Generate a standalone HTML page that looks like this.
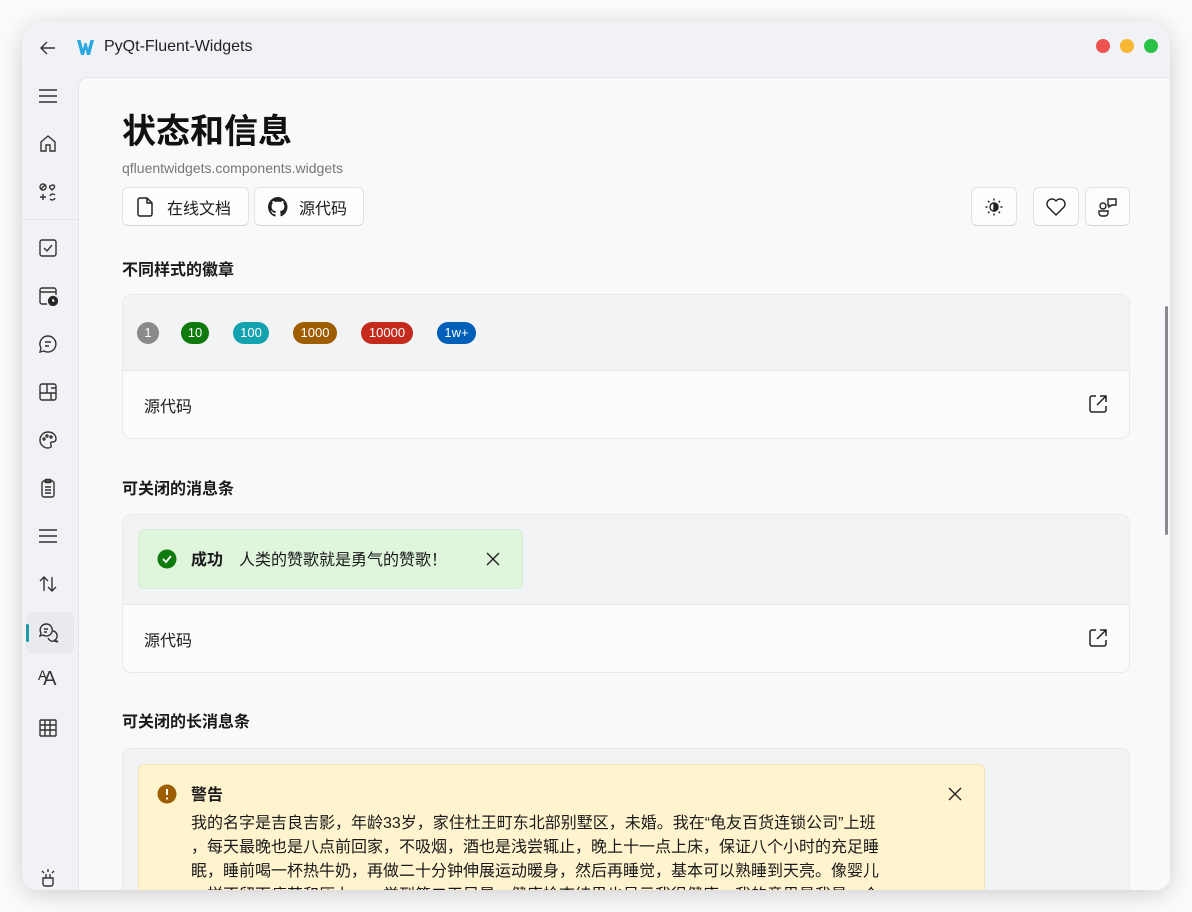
<!DOCTYPE html>
<html><head><meta charset="utf-8"><style>
*{box-sizing:border-box;margin:0;padding:0}
html,body{width:1192px;height:912px;overflow:hidden}
body{background:#fbfbfb;font-family:"Liberation Sans","Noto Sans CJK SC",sans-serif;color:#1a1a1a;position:relative}
.win{position:absolute;left:22px;top:22px;width:1148px;height:868px;border-radius:22px 22px 14px 14px;background:#f0f2f5;box-shadow:0 4px 24px rgba(0,0,0,.18);overflow:hidden}
.abs{position:absolute}
.panel{position:absolute;left:56px;top:55px;width:1092px;height:813px;background:#f8f9fb;border-top:1px solid #e3e5e8;border-left:1px solid #e3e5e8;border-top-left-radius:10px;overflow:hidden}
.btn{position:absolute;top:109px;height:39px;background:#fdfdfd;border:1px solid #e2e2e2;border-bottom-color:#d4d4d4;border-radius:6px;font-size:16px;display:flex;align-items:center}
.h{position:absolute;left:43px;font-size:16px;font-weight:bold}
.card{position:absolute;left:43px;width:1008px;border:1px solid #e8e9eb;border-radius:9px;overflow:hidden;background:#fafbfc}
.top{background:#f2f3f5;border-bottom:1px solid #e8e9eb;position:relative}
.badge{position:absolute;top:27px;height:22px;border-radius:11px;color:#fff;font-size:13px;line-height:22px;text-align:center}
.src{position:absolute;left:21px;font-size:16px}
svg{display:block}
</style></head><body>
<div class="win">
 <svg class="abs" style="left:16px;top:16px" width="20" height="20" viewBox="0 0 20 20" fill="none" stroke="#333" stroke-width="1.4"><path d="M17 10H3M9 4L3 10l6 6"/></svg>
 <svg class="abs" style="left:54px;top:17px" width="19" height="17" viewBox="0 0 19 17"><path d="M1 1l4 15h3l1.5-6 1.5 6h3l4-15h-3.5L12 10 10.5 4h-2L7 10 4.5 1z" fill="#29a8e0"/></svg>
 <div class="abs" style="left:82px;top:16px;font-size:16px;color:#222">PyQt-Fluent-Widgets</div>
 <div class="abs" style="left:1074px;top:17px;width:14px;height:14px;border-radius:50%;background:#ef5350"></div>
 <div class="abs" style="left:1098px;top:17px;width:14px;height:14px;border-radius:50%;background:#f7b733"></div>
 <div class="abs" style="left:1122px;top:17px;width:14px;height:14px;border-radius:50%;background:#29c247"></div>

 <svg class="abs" style="left:16px;top:64px" width="20" height="20" viewBox="0 0 20 20" stroke="#333" stroke-width="1.4"><path d="M1 4h18M1 10h18M1 16h18"/></svg>
 <svg class="abs" style="left:16px;top:112px" width="20" height="20" viewBox="0 0 20 20" fill="none" stroke="#333" stroke-width="1.4"><path d="M3 8l7-6 7 6v9h-5v-6H8v6H3z"/></svg>
 <svg class="abs" style="left:16px;top:160px" width="20" height="20" viewBox="0 0 20 20" fill="none" stroke="#333" stroke-width="1.4"><circle cx="5" cy="5" r="3"/><path d="M3 7l4-4M13 4c1-2 5-1 3 2l-2 2-2-2c-1-1 0-3 1-2M2 15h6M5 12v6M12 14a3 3 0 015-1M17 16a3 3 0 01-5 1"/></svg>
 <div class="abs" style="left:0;top:197px;width:56px;height:1px;background:#e3e5e8"></div>
 <svg class="abs" style="left:16px;top:216px" width="20" height="20" viewBox="0 0 20 20" fill="none" stroke="#333" stroke-width="1.4"><rect x="2" y="2" width="16" height="16" rx="2"/><path d="M6 10l3 3 5-6"/></svg>
 <svg class="abs" style="left:16px;top:264px" width="20" height="20" viewBox="0 0 20 20" fill="none" stroke="#333" stroke-width="1.4"><path d="M9 18H4a2 2 0 01-2-2V4a2 2 0 012-2h12a2 2 0 012 2v5M2 6h16"/><circle cx="15" cy="15" r="4.5" fill="#222"/><path d="M15 13v2h1.5" stroke="#fff"/></svg>
 <svg class="abs" style="left:16px;top:312px" width="20" height="20" viewBox="0 0 20 20" fill="none" stroke="#333" stroke-width="1.4"><path d="M10 2a8 8 0 11-4 15l-4 1 1-4A8 8 0 0110 2zM7 8h6M7 12h4"/></svg>
 <svg class="abs" style="left:16px;top:360px" width="20" height="20" viewBox="0 0 20 20" fill="none" stroke="#333" stroke-width="1.4"><rect x="2" y="2" width="16" height="16" rx="2"/><path d="M2 11h16M9 2v9M13 11v7M13 6h5"/></svg>
 <svg class="abs" style="left:16px;top:408px" width="20" height="20" viewBox="0 0 20 20" fill="none" stroke="#333" stroke-width="1.4"><path d="M10 2c5 0 8 3 8 7 0 3-3 3-4 3s-2 1-1 3c1 2-1 3-3 3-4 0-8-3-8-8s4-8 8-8z"/><circle cx="6" cy="9" r="1"/><circle cx="9" cy="6" r="1"/><circle cx="13" cy="7" r="1"/></svg>
 <svg class="abs" style="left:16px;top:456px" width="20" height="20" viewBox="0 0 20 20" fill="none" stroke="#333" stroke-width="1.4"><rect x="4" y="3" width="12" height="16" rx="2"/><rect x="7" y="1.5" width="6" height="3" rx="1"/><path d="M7 9h6M7 12h6M7 15h6"/></svg>
 <svg class="abs" style="left:16px;top:504px" width="20" height="20" viewBox="0 0 20 20" stroke="#333" stroke-width="1.4"><path d="M1 4h18M1 10h18M1 16h18"/></svg>
 <svg class="abs" style="left:16px;top:552px" width="20" height="20" viewBox="0 0 20 20" fill="none" stroke="#333" stroke-width="1.4"><path d="M6 17V3M2 7l4-4 4 4M14 3v14M10 13l4 4 4-4"/></svg>
 <div class="abs" style="left:4px;top:590px;width:48px;height:42px;border-radius:6px;background:#e8eaed"></div>
 <div class="abs" style="left:4px;top:602px;width:3px;height:18px;border-radius:2px;background:#1e9aa8"></div>
 <svg class="abs" style="left:16px;top:600px" width="22" height="22" viewBox="0 0 22 22" fill="none" stroke="#333" stroke-width="1.4"><path d="M8 2a6 6 0 11-3 11l-3 1 1-3A6 6 0 018 2zM6 7h4M6 10h3M15 9a5 5 0 012 9l3 2-4-1a5 5 0 01-6-3"/></svg>
 <div class="abs" style="left:16px;top:646px;font-size:20px;color:#333;letter-spacing:-4px">ᴬA</div>
 <svg class="abs" style="left:16px;top:696px" width="20" height="20" viewBox="0 0 20 20" fill="none" stroke="#333" stroke-width="1.4"><rect x="2" y="2" width="16" height="16" rx="1"/><path d="M2 7h16M2 12h16M7 2v16M12 2v16"/></svg>
 <svg class="abs" style="left:16px;top:846px" width="20" height="20" viewBox="0 0 20 20" fill="none" stroke="#333" stroke-width="1.4"><path d="M5 10h10v6a2 2 0 01-2 2H7a2 2 0 01-2-2zM8 10V6M12 10V6M4 3l2 2M16 3l-2 2M10 1v3"/></svg>

 <div class="panel">
  <div class="abs" style="left:43px;top:26px;font-size:34px;font-weight:bold;color:#111">状态和信息</div>
  <div class="abs" style="left:43px;top:82px;font-size:14px;color:#777">qfluentwidgets.components.widgets</div>
  <div class="btn" style="left:43px;width:127px"><svg style="margin-left:14px" width="18" height="20" viewBox="0 0 18 20" fill="none" stroke="#222" stroke-width="1.5"><path d="M3 1h7l5 5v11a2 2 0 01-2 2H3a2 2 0 01-2-2V3a2 2 0 012-2zM10 1v5h5"/></svg><span style="margin-left:12px">在线文档</span></div>
  <div class="btn" style="left:175px;width:110px"><svg style="margin-left:13px" width="20" height="20" viewBox="0 0 16 16"><path fill="#222" d="M8 0a8 8 0 00-2.5 15.6c.4 0 .5-.2.5-.4v-1.5c-2.2.5-2.7-1-2.7-1-.4-.9-.9-1.2-.9-1.2-.7-.5.1-.5.1-.5.8.1 1.2.8 1.2.8.7 1.3 1.900.9 2.3.7.1-.5.3-.9.5-1.1-1.8-.2-3.6-.9-3.6-4 0-.9.3-1.6.8-2.1-.1-.2-.4-1 .1-2.1 0 0 .7-.2 2.2.8a7.5 7.5 0 014 0c1.5-1 2.2-.8 2.2-.8.4 1.1.2 1.9.1 2.1.5.6.8 1.3.8 2.1 0 3.1-1.9 3.7-3.6 3.9.3.3.5.8.5 1.5v2.2c0 .2.1.5.6.4A8 8 0 008 0z"/></svg><span style="margin-left:11px">源代码</span></div>
  <div class="btn" style="left:892px;width:46px;justify-content:center"><svg width="20" height="20" viewBox="0 0 20 20" fill="none" stroke="#222" stroke-width="1.4"><circle cx="10" cy="10" r="4"/><path d="M10 6a4 4 0 010 8z" fill="#222"/><path d="M10 1.5v2M10 16.5v2M1.5 10h2M16.5 10h2M4 4l1.4 1.4M14.6 14.6L16 16M4 16l1.4-1.4M14.6 5.4L16 4"/></svg></div>
  <div class="btn" style="left:954px;width:46px;justify-content:center"><svg width="22" height="20" viewBox="0 0 22 20" fill="none" stroke="#222" stroke-width="1.4"><path d="M11 18L3 10a5 5 0 018-6 5 5 0 018 6z"/></svg></div>
  <div class="btn" style="left:1006px;width:45px;justify-content:center"><svg width="22" height="22" viewBox="0 0 22 22" fill="none" stroke="#222" stroke-width="1.4"><circle cx="6" cy="10" r="3"/><path d="M2 15h9v2a3 3 0 01-3 3H5a3 3 0 01-3-3zM11 3h8v6h-4l-3 2V9h-1z"/></svg></div>

  <div class="h" style="top:178px">不同样式的徽章</div>
  <div class="card" style="top:216px;height:145px">
   <div class="top" style="height:76px">
    <div class="badge" style="left:14px;width:22px;background:#8a8a8a">1</div>
    <div class="badge" style="left:58px;width:28px;background:#0f7b0f">10</div>
    <div class="badge" style="left:110px;width:36px;background:#14a1b0">100</div>
    <div class="badge" style="left:170px;width:44px;background:#9d5d00">1000</div>
    <div class="badge" style="left:238px;width:52px;background:#c42b1c">10000</div>
    <div class="badge" style="left:314px;width:39px;background:#005fb8">1w+</div>
   </div>
   <div class="src" style="top:98px">源代码</div>
   <svg class="abs" style="left:964px;top:98px" width="22" height="22" viewBox="0 0 22 22" fill="none" stroke="#222" stroke-width="1.5"><path d="M9 3H5a2 2 0 00-2 2v12a2 2 0 002 2h12a2 2 0 002-2v-4M13 3h6v6M19 3l-9 9"/></svg>
  </div>

  <div class="h" style="top:397px">可关闭的消息条</div>
  <div class="card" style="top:436px;height:159px">
   <div class="top" style="height:90px">
    <div class="abs" style="left:15px;top:14px;width:385px;height:60px;background:#dff6dd;border:1px solid #d6ecd4;border-radius:6px">
     <svg class="abs" style="left:18px;top:19px" width="20" height="20" viewBox="0 0 20 20"><circle cx="10" cy="10" r="9.5" fill="#0f7b0f"/><path d="M6 10l3 3 5-6" fill="none" stroke="#fff" stroke-width="1.8"/></svg>
     <div class="abs" style="left:52px;top:16px;font-size:16px;font-weight:bold">成功</div>
     <div class="abs" style="left:100px;top:16px;font-size:16px">人类的赞歌就是勇气的赞歌！</div>
     <svg class="abs" style="left:347px;top:22px" width="14" height="14" viewBox="0 0 14 14" stroke="#222" stroke-width="1.4"><path d="M1 1l12 12M13 1L1 13"/></svg>
    </div>
   </div>
   <div class="src" style="top:112px">源代码</div>
   <svg class="abs" style="left:964px;top:112px" width="22" height="22" viewBox="0 0 22 22" fill="none" stroke="#222" stroke-width="1.5"><path d="M9 3H5a2 2 0 00-2 2v12a2 2 0 002 2h12a2 2 0 002-2v-4M13 3h6v6M19 3l-9 9"/></svg>
  </div>

  <div class="h" style="top:630px">可关闭的长消息条</div>
  <div class="card" style="top:670px;height:160px;background:#f2f3f5">
   <div class="abs" style="left:15px;top:15px;width:847px;height:200px;background:#fff4ce;border:1px solid #f2e6b8;border-radius:6px">
    <svg class="abs" style="left:18px;top:19px" width="20" height="20" viewBox="0 0 20 20"><circle cx="10" cy="10" r="9.5" fill="#9d5d00"/><path d="M10 5v6" stroke="#fff" stroke-width="2"/><circle cx="10" cy="14.5" r="1.1" fill="#fff"/></svg>
    <div class="abs" style="left:52px;top:16px;font-size:16px;font-weight:bold">警告</div>
    <svg class="abs" style="left:809px;top:22px" width="14" height="14" viewBox="0 0 14 14" stroke="#222" stroke-width="1.4"><path d="M1 1l12 12M13 1L1 13"/></svg>
    <div class="abs" style="left:52px;top:47px;width:740px;font-size:16px;line-height:24px">我的名字是吉良吉影，年龄33岁，家住杜王町东北部别墅区，未婚。我在“龟友百货连锁公司”上班<br>，每天最晚也是八点前回家，不吸烟，酒也是浅尝辄止，晚上十一点上床，保证八个小时的充足睡<br>眠，睡前喝一杯热牛奶，再做二十分钟伸展运动暖身，然后再睡觉，基本可以熟睡到天亮。像婴儿<br>一样不留下疲劳和压力，一觉到第二天早晨。健康检查结果也显示我很健康。我的意思是我是一个</div>
   </div>
  </div>
 </div>
 <div class="abs" style="left:1143px;top:284px;width:3px;height:229px;border-radius:2px;background:#8a8a8e"></div>
</div>
</body></html>
